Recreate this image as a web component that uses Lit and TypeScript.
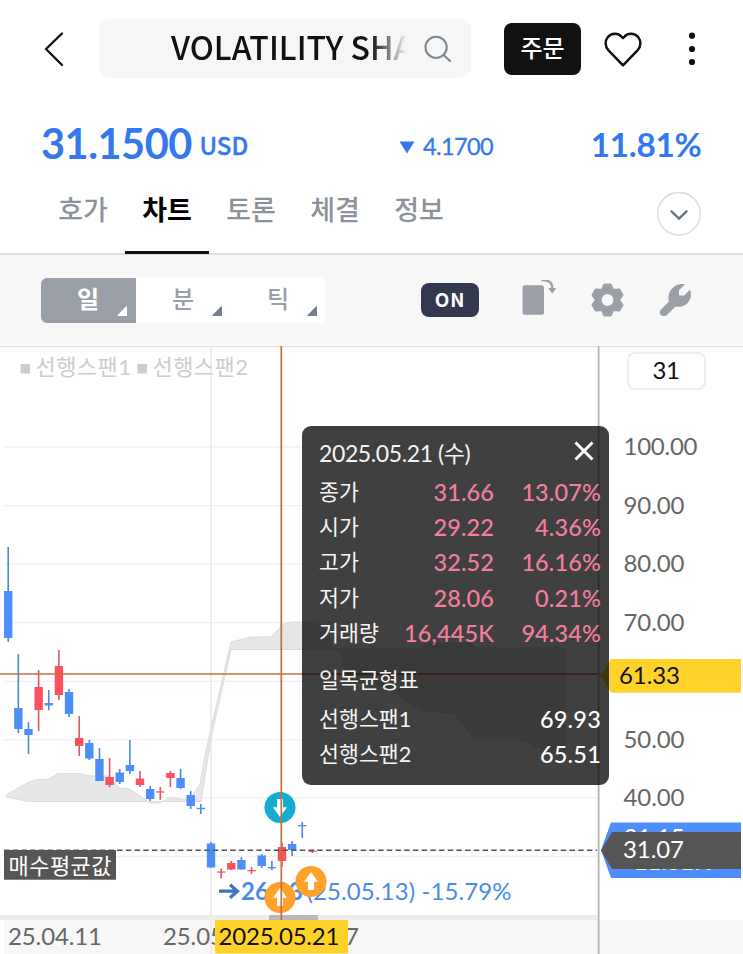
import { LitElement, html, svg, css } from "lit";
import { customElement } from "lit/decorators.js";

type Candle = [up: number, high: number, low: number, top: number, bottom: number];

const CHART_TOP = 346;
const FIRST_X = 8.2;
const PITCH = 10.14;

// Each entry: rising flag, wick top, wick bottom, body top, body bottom
const CANDLES: Candle[] = [
  [0, 547, 642, 591, 638],
  [0, 654, 733, 708, 729],
  [0, 722, 754, 729, 735],
  [1, 670, 731, 687, 710],
  [0, 690, 710, 703, 705.5],
  [1, 650, 700, 666, 695],
  [0, 689, 717, 692, 714],
  [1, 716, 756, 738, 746],
  [0, 740, 760, 743, 758.5],
  [0, 748, 781, 759, 781],
  [1, 758, 787, 777, 785],
  [0, 769, 784, 772.5, 782],
  [0, 740, 774, 765, 771],
  [1, 771, 787, 778.5, 785],
  [0, 786, 801, 789, 799],
  [1, 787, 800, 791.3, 792.6],
  [1, 771, 787, 773, 778],
  [0, 769, 789, 778, 788],
  [0, 791, 809, 795, 806],
  [0, 804, 814, 807.8, 809.2],
  [0, 842, 867.5, 843.5, 867.5],
  [1, 868.5, 878.5, 871.5, 872.7],
  [1, 861, 870, 863, 869.5],
  [0, 857, 869.5, 860, 869.5],
  [1, 867, 874, 870, 871.3],
  [0, 854, 868, 855.5, 866],
  [0, 861, 870, 867, 868.3],
  [1, 843, 867, 847, 861],
  [0, 841, 856, 844, 850],
  [0, 822, 838, 825, 826.3],
  [1, 849.5, 853, 850.6, 851.8],
];

const GRID = [447, 505.6, 564.2, 622.7, 681.3, 739.7, 797.5, 856.3];
const PRICES: [string, number][] = [
  ["100.00", 447],
  ["90.00", 505.6],
  ["80.00", 564],
  ["70.00", 622.5],
  ["50.00", 739.7],
  ["40.00", 797.5],
];

const QUOTES = [
  ["종가", "31.66", "13.07%"],
  ["시가", "29.22", "4.36%"],
  ["고가", "32.52", "16.16%"],
  ["저가", "28.06", "0.21%"],
  ["거래량", "16,445K", "94.34%"],
];

@customElement("top-bar")
class TopBar extends LitElement {
  static styles = css`
    :host { display: flex; align-items: center; height: 97px; padding-left: 43px; box-sizing: border-box; }
    .back { width: 22px; height: 36px; margin-right: 34px; }
    .search { display: flex; align-items: center; width: 372px; height: 59px; border-radius: 11px; background: #f6f6f6; }
    .name {
      width: 234px; margin: 0 0 6px 72px; overflow: hidden; white-space: nowrap; color: #111;
      font: 500 32px/46px "Noto Sans CJK KR", sans-serif;
      -webkit-mask-image: linear-gradient(90deg, #000 200px, transparent 236px);
      mask-image: linear-gradient(90deg, #000 200px, transparent 236px);
    }
    .lens { width: 30px; height: 30px; margin-left: 18px; }
    .order {
      width: 77px; height: 52px; margin-left: 33px; border-radius: 8px; background: #111; color: #fff;
      text-align: center; font: 500 24px/48px "Noto Sans CJK KR", sans-serif;
    }
    .heart { width: 40px; height: 38px; margin-left: 22px; }
    .more { width: 10px; height: 36px; margin-left: 44px; }
  `;
  render() {
    return html`
      <svg class="back" viewBox="0 0 22 36"><path d="M19 2.5 3 18 19 34" fill="none" stroke="#111" stroke-width="2.4" stroke-linecap="round" stroke-linejoin="round"/></svg>
      <div class="search">
        <div class="name">VOLATILITY SHARES</div>
        <svg class="lens" viewBox="0 0 30 30"><g fill="none" stroke="#7b8695" stroke-width="2" stroke-linecap="round"><circle cx="13.1" cy="13.3" r="10.6"/><path d="M20.7 21 27 27"/></g></svg>
      </div>
      <div class="order">주문</div>
      <svg class="heart" viewBox="0 0 40 38"><path d="M20 35.3 5.5 20.3C2 16.5 1.6 11 4.7 7.2 8.6 2.7 15 2.9 18.5 6.6L20 8.1 21.5 6.6C25 2.900 31.4 2.7 35.3 7.2 38.4 11 38 16.500 34.5 20.300Z" fill="none" stroke="#111" stroke-width="2.500" stroke-linejoin="round"/></svg>
      <svg class="more" viewBox="0 0 10 36"><g fill="#111"><circle cx="5" cy="4.700" r="3.100"/><circle cx="5" cy="18" r="3.100"/><circle cx="5" cy="31" r="3.100"/></g></svg>
    `;
  }
}

@customElement("price-line")
class PriceLine extends LitElement {
  static styles = css`
    :host { display: flex; align-items: flex-start; height: 83px; box-sizing: border-box; padding: 21px 41.500px 0 41px; color: #3478f0; font-family: Lato, sans-serif; line-height: 50px; }
    .price { width: 158.500px; font-size: 41.5px; font-weight: 700; letter-spacing: -0.5px; }
    .unit { width: 199.500px; margin-top: 1.500px; font: 500 24px/50px "Noto Sans CJK KR", sans-serif; -webkit-text-stroke: .4px; }
    .mark { width: 16px; height: 13px; margin: 22.500px 8px 0 0; }
    .diff { margin-top: 3px; font-size: 23.500px; font-weight: 400; letter-spacing: -.6px; -webkit-text-stroke: .3px; }
    .rate { margin: 1px 0 0 auto; font-size: 33.300px; font-weight: 700; letter-spacing: -.3px; }
  `;
  render() {
    return html`
      <span class="price">31.1500</span><span class="unit">USD</span>
      <svg class="mark" viewBox="0 0 16 13"><path d="M.5 .5H15.5L8 12.5Z" fill="#3478f0"/></svg>
      <span class="diff">4.1700</span><span class="rate">11.81%</span>
    `;
  }
}

@customElement("tab-strip")
class TabStrip extends LitElement {
  static styles = css`
    :host { display: flex; height: 75px; box-sizing: border-box; border-bottom: 2px solid #dfdfdf; padding: 0 42px 0 41px; }
    .tab { width: 84px; height: 73.500px; text-align: center; color: #8d929a; font: 500 27px/58px "Noto Sans CJK KR", sans-serif; }
    .on { box-sizing: border-box; border-bottom: 3.500px solid #111; color: #000; font-weight: 700; }
    .fold { width: 44px; height: 44px; margin: 12px 0 0 auto; }
  `;
  render() {
    return html`
      ${["호가", "차트", "토론", "체결", "정보"].map((t, i) => html`<div class=${i === 1 ? "tab on" : "tab"}>${t}</div>`)}
      <svg class="fold" viewBox="0 0 44 44"><g fill="none"><circle cx="22" cy="21.700" r="21.300" stroke="#dcdcdc" stroke-width="1.500"/><path d="M14.500 19.300 22 26.500 29.500 19.300" stroke="#68727f" stroke-width="2.400" stroke-linecap="round"/></g></svg>
    `;
  }
}

@customElement("chart-tools")
class ChartTools extends LitElement {
  static styles = css`
    :host { display: flex; align-items: center; height: 91px; box-sizing: border-box; background: #f7f7f7; padding-left: 41px; }
    .units { display: flex; width: 285px; height: 45px; border-radius: 6px; overflow: hidden; background: #fff; }
    .unit { display: flex; width: 95px; color: #9a9ea6; font: 500 24px/40px "Noto Sans CJK KR", sans-serif; justify-content: flex-end; }
    .sel { background: #9a9fa8; color: #fff; font-weight: 700; }
    .corner { width: 10px; height: 10px; margin: 27.500px 9.300px 0 17.500px; }
    .tools { display: flex; align-items: center; margin-bottom: 2px; }
    .on { width: 58px; height: 34px; margin-left: 95px; border-radius: 8px; background: #333850; color: #fff; text-align: center; font: 700 19px/32px "Noto Sans CJK KR", sans-serif; letter-spacing: .8px; }
    .icon { height: 40px; width: 40px; }
    .turn { margin-left: 38.500px; }
    .gear { margin-left: 28px; }
    .wrench { margin-left: 29px; }
  `;
  render() {
    const teeth = [0, 60, 120, 180, 240, 300];
    return html`
      <div class="units">
        ${["일", "분", "틱"].map((u, i) => html`<div class=${i === 0 ? "unit sel" : "unit"}>${u}<svg class="corner" viewBox="0 0 10 10"><path d="M9 .5Q10 0 10 1V9.5Q10 10 9.5 10H1Q0 10 .6 9Z" fill=${i === 0 ? "#fff" : "#747d8c"}/></svg></div>`)}
      </div>
      <div class="tools">
        <div class="on">ON</div>
        <svg class="icon turn" viewBox="0 0 40 40"><rect x="4.500" y="5.200" width="21.500" height="29.500" rx="2.500" fill="#9a9fa8"/><path d="M23.300 .2Q34.500-.8 34.500 9" fill="none" stroke="#9a9fa8" stroke-width="2.200" overflow="visible"/><path d="M30.300 8H38.300L34.300 13.800Z" fill="#9a9fa8"/></svg>
        <svg class="icon gear" viewBox="0 0 40 40"><g transform="translate(21.500 20)" fill="#9a9fa8">
          <path fill-rule="evenodd" d="M-12.500 0A12.500 12.500 0 1 0 12.500 0A12.500 12.500 0 1 0-12.500 0ZM-5.900 0A5.900 5.900 0 1 1 5.900 0A5.900 5.900 0 1 1-5.900 0Z"/>
          ${teeth.map((a) => svg`<path transform="rotate(${a})" d="M-6.5-10.5-4.5-15Q-4-16.500-3-16.500H3Q4-16.500 4.500-15L6.500-10.500Z"/>`)}
        </g></svg>
        <svg class="icon wrench" viewBox="0 0 40 40"><path d="M6 29.500 14 21.500C11.500 12 19 2.500 30 4.200L24 10.300V15.500H29.200L35.200 9.500C38.500 20.500 30.500 28.500 20.500 26.500L12.500 34.500C8 38.500 2 34 6 29.500Z" fill="#9a9fa8"/></svg>
      </div>
    `;
  }
}

@customElement("price-chart")
class PriceChart extends LitElement {
  static styles = css`
    :host { display: block; height: 608px; }
    .canvas { display: block; width: 743px; height: 608px; }
    .num { font: 400 24px Lato, "Noto Sans CJK KR", sans-serif; }
    .kor { font: 400 22px Lato, "Noto Sans CJK KR", sans-serif; }
    .axis { fill: #666; }
    .dark { fill: #111; }
    .white { fill: #fff; }
    .legend { fill: #ccc; }
    .low { fill: #4b8be8; }
    .lowbold { fill: #4b8be8; font-weight: 700; }
    .cream { fill: #f6f3b4; font-weight: 700; }
  `;
  private text(cls: string, x: number, y: number, len: number, value: string) {
    return svg`<text class=${cls} x=${x} y=${y} textLength=${len}>${value}</text>`;
  }
  private candle([up, high, low, top, bottom]: Candle, i: number) {
    const x = FIRST_X + i * PITCH;
    const color = up ? "#fa5060" : "#4d8efa";
    const wick = up ? "#d9596b" : "#4a88dc";
    return svg`<rect x=${x - 0.8} y=${high} width="1.6" height=${low - high} fill=${wick}/><rect x=${x - 4.2} y=${top} width="8.4" height=${bottom - top} fill=${color}/>`;
  }
  private badge(x: number, y: number, color: string, down: boolean) {
    return svg`<g transform="translate(${x} ${y})"><circle r="15.5" fill=${color}/><path transform="rotate(${down ? 180 : 0})" d="M0-9.5 7 .3H3V8.5H-3V.3H-7Z" fill="#fff"/></g>`;
  }
  render() {
    return html`<svg class="canvas" viewBox="0 ${CHART_TOP} 743 608">
      <rect x="0" y="346" width="743" height="1.2" fill="#e2e2e2"/>
      <rect x="4" y="920" width="739" height="34" fill="#f7f7f7"/>
      <g fill="#efefef">
        ${GRID.map((y) => svg`<rect x="4" y=${y - 0.6} width="593" height="1.2"/>`)}
        <rect x="210" y="347" width="1.8" height="607" fill="#ececec"/>
      </g>
      <path fill="#e7e7e7" stroke="#dcdcdc" stroke-width="1" d="M7 794.5 28 782.5 38 779.5H48L58 773.5H79L90 776H109L119 788 130 789 150 803H160L170 797 181 799.5 190 799 200 784 206 750 231 642 251 637H271L283 624 292 622H310L326 630 333 649 420 649 432 643H470L476 648H565V757L540 748 515 737H473L455 714 422 710 402 698 395 688 347 681 341 652 333 649.5H231L211 738 201 801.5H28L7 797Z"/>
      <rect x="0" y="915" width="597" height="5" fill="#ededed"/>
      <rect x="269" y="915" width="49" height="5" fill="#b9b9b9"/>
      ${CANDLES.map((c, i) => this.candle(c, i))}
      <path d="M4 850.2H597" stroke="#555" stroke-width="1.5" stroke-dasharray="5.5 3.2"/>
      <rect x="20.5" y="364" width="9.5" height="9.5" fill="#ccc"/><rect x="137.500" y="364" width="9.500" height="9.500" fill="#ccc"/>
      ${this.text("kor legend", 35.5, 374.5, 95.5, "선행스팬1")}${this.text("kor legend", 152.5, 374.5, 95.5, "선행스팬2")}
      <rect x="4" y="850" width="112" height="29.700" fill="#555"/>
      ${this.text("kor white", 8.5, 873.5, 103, "매수평균값")}
      <path d="M219 891.200H237M230 884.700 237.500 891.200 230 897.700" fill="none" stroke="#3b76b9" stroke-width="3.200"/>
      ${this.text("num lowbold", 241, 899.5, 62, "26.23")}
      ${this.text("num low", 306.5, 899.5, 205, "(25.05.13) -15.79%")}
      ${this.text("num axis", 8, 944.8, 94, "25.04.11")}${this.text("num axis", 163, 944.8, 94, "25.05.13")}${this.text("num axis", 345, 944.8, 13.5, "7")}
      ${this.badge(280, 807.5, "#14acd1", true)}${this.badge(280, 897.5, "#ffa22b", false)}${this.badge(311, 881.5, "#ffa22b", false)}
      <path d="M281.300 346V920M0 674H601" stroke="#c66f40" stroke-width="1.700"/>
      <rect x="215" y="920" width="133" height="33.500" fill="#ffd229"/>
      ${this.text("num dark", 218.5, 944.8, 121, "2025.05.21")}
      <rect x="597.700" y="346" width="1.800" height="608" fill="#b3b3b3"/>
      <rect x="628" y="353" width="77" height="36" rx="7" fill="#fff" stroke="#e9e9e9" stroke-width="1.500"/>
      ${this.text("num dark", 652.5, 378.8, 27.5, "31")}
      ${PRICES.map(([label, y]) => this.text("num axis", 623.5, y + 8, label.length > 5 ? 74 : 61, label))}
      <path d="M601 676 611 659H741V692.700H611Z" fill="#ffd229"/>
      ${this.text("num dark", 619, 683.8, 61, "61.33")}
      <path d="M601 850 611 822.500H741V878H611Z" fill="#4d8efa"/>
      ${this.text("num white", 623.5, 846, 61, "31.15")}${this.text("num cream", 633.5, 870.2, 80, "11.81%")}
      <path d="M601 850.500 612 832H741V869H612Z" fill="#555"/>
      ${this.text("num white", 623, 858, 61, "31.07")}
    </svg>`;
  }
}

@customElement("quote-popup")
class QuotePopup extends LitElement {
  static styles = css`
    :host { display: block; box-sizing: border-box; width: 307px; height: 359px; padding: 10px 8px 0 17px; border-radius: 9px; background: rgba(0, 0, 0, .75); color: #f4f4f4; font: 400 21.700px/35.200px Lato, "Noto Sans CJK KR", sans-serif; }
    .head { display: flex; justify-content: space-between; height: 39px; }
    .date { font-size: 23px; letter-spacing: -.4px; }
    .close { width: 20px; height: 20px; margin: 5px 7px 0 0; }
    .row { display: grid; grid-template-columns: 70px 105px 107px; height: 35.200px; }
    .val { text-align: right; color: #f37e9d; font-size: 23.500px; font-weight: 500; letter-spacing: .1px; }
    .title { height: 41px; padding-top: 10px; line-height: 38px; }
    .span { display: flex; justify-content: space-between; height: 35.200px; }
    .num { font-size: 23.500px; font-weight: 500; letter-spacing: .2px; color: #fff; }
  `;
  render() {
    return html`
      <div class="head"><span class="date">2025.05.21 (수)</span><svg class="close" viewBox="0 0 20 20"><path d="M1.500 1.500 18.500 18.500M18.500 1.500 1.500 18.500" stroke="#fff" stroke-width="3"/></svg></div>
      ${QUOTES.map(([k, v, p]) => html`<div class="row"><span>${k}</span><span class="val">${v}</span><span class="val">${p}</span></div>`)}
      <div class="title">일목균형표</div>
      <div class="span"><span>선행스팬1</span><span class="num">69.93</span></div>
      <div class="span"><span>선행스팬2</span><span class="num">65.51</span></div>
    `;
  }
}

@customElement("app-root")
class AppRoot extends LitElement {
  static styles = css`
    :host { display: block; position: relative; width: 743px; height: 954px; overflow: hidden; background: #fff; }
    .popup { position: absolute; left: 302px; top: 426px; }
  `;
  render() {
    return html`
      <top-bar></top-bar>
      <price-line></price-line>
      <tab-strip></tab-strip>
      <chart-tools></chart-tools>
      <price-chart></price-chart>
      <quote-popup class="popup"></quote-popup>
    `;
  }
}
